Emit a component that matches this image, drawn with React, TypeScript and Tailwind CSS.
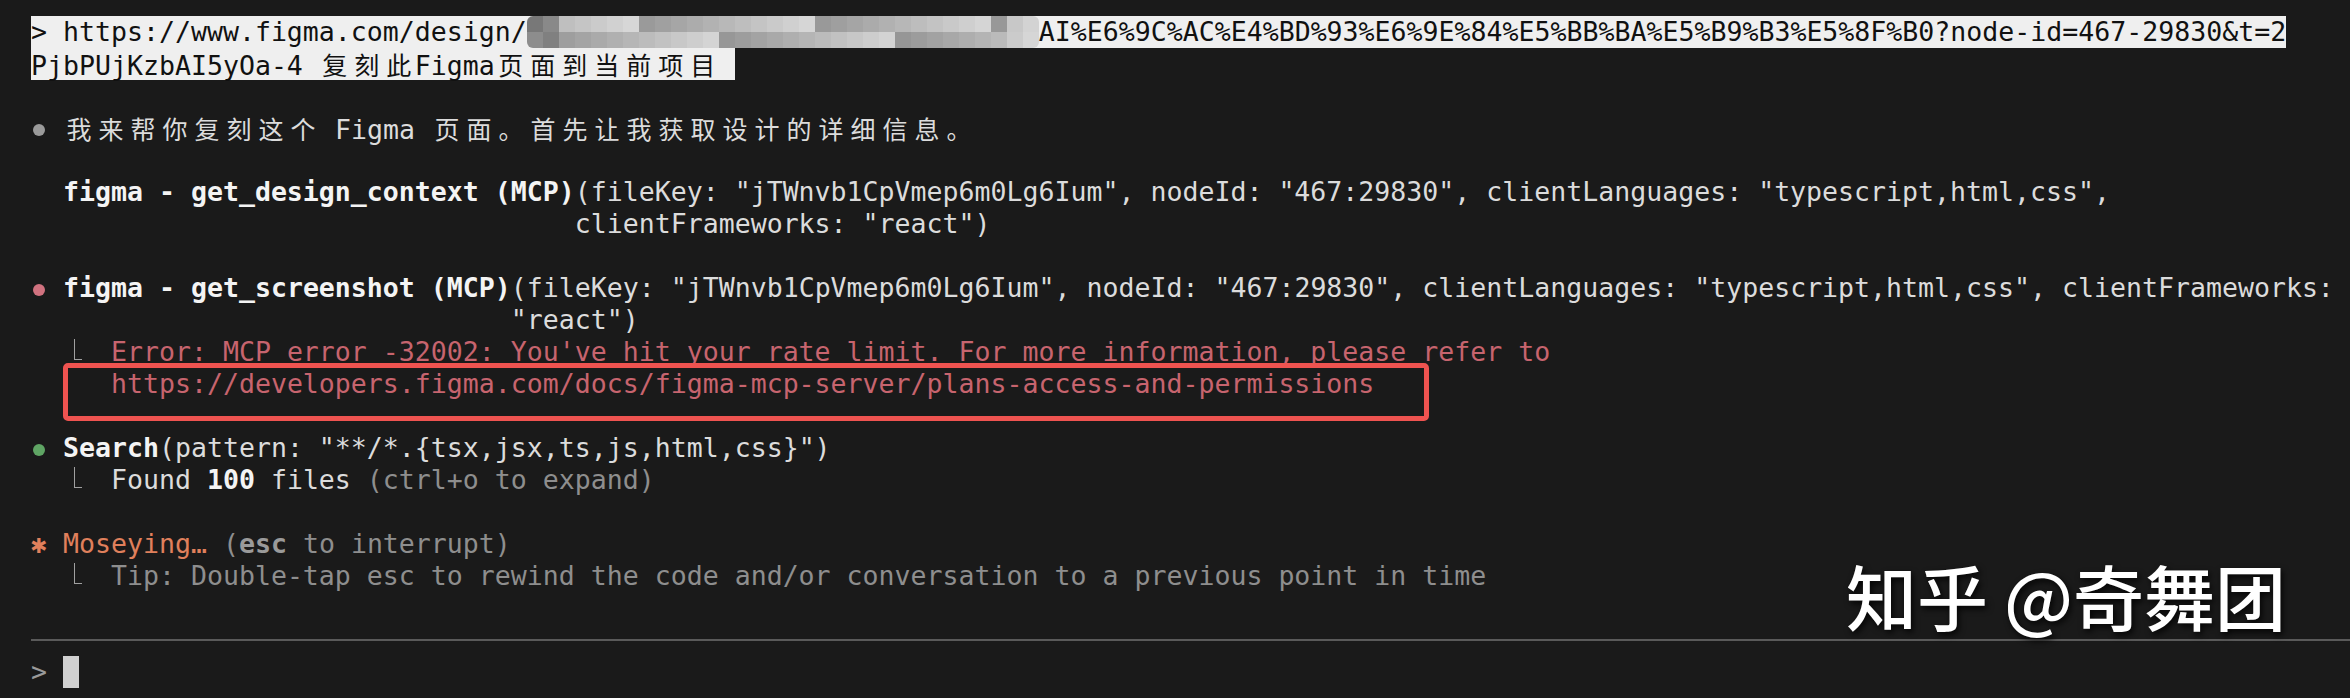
import React from "react";

const CJK = /[\u2E80-\u9FFF\u3000-\u303F\uFF00-\uFFEF]/;

function M({ s }: { s: string }) {
  const out: React.ReactNode[] = [];
  let buf = "";
  let k = 0;
  for (const ch of s) {
    if (CJK.test(ch)) {
      if (buf) out.push(<span key={k++}>{buf}</span>);
      buf = "";
      out.push(
        <span
          key={k++}
          className="inline-block w-[32px] text-center font-['Noto_Sans_CJK_SC',sans-serif] text-[25px]"
        >
          {ch}
        </span>
      );
    } else buf += ch;
  }
  if (buf) out.push(<span key={k++}>{buf}</span>);
  return <>{out}</>;
}

function Line({ children }: { children?: React.ReactNode }) {
  return <div className="h-[32px] whitespace-pre">{children}</div>;
}

function Dot({ color }: { color: string }) {
  return (
    <span className="inline-flex w-[16px] h-[32px] align-top items-center justify-center">
      <span className={`block w-[12px] h-[12px] rounded-full mt-[3px] ${color}`} />
    </span>
  );
}

function Elbow() {
  return (
    <span className="inline-block relative w-[16px] h-[32px] align-top">
      <span className="absolute left-[11px] top-[3px] w-[8px] h-[21px] border-l-[1.5px] border-b-[1.5px] border-[#a0a0a0]" />
    </span>
  );
}

const mosaic = Array.from({ length: 66 }, (_, i) => {
  const col = i % 33;
  const row = Math.floor(i / 33);
  let v = 150 + ((i * 73 + row * 37 + 29) % 67);
  if (col < 2) v = 120 + ((i * 17) % 30);
  if (col > 29) v = 200 + ((i * 11) % 30);
  return `rgb(${v},${v},${v})`;
});

function Mosaic() {
  return (
    <span className="inline-grid grid-cols-[repeat(33,16px)] grid-rows-[repeat(2,16px)] w-[512px] h-[32px] align-top rounded-[6px] overflow-hidden">
      {mosaic.map((c, i) => (
        <span key={i} className="block" style={{ backgroundColor: c }} />
      ))}
    </span>
  );
}

export default function App() {
  const B = "text-[#f4f4f4] font-bold";
  const red = "text-[#c7646e]";
  const gray = "text-[#8e8e8e]";
  return (
    <div className="relative w-[2350px] h-[698px] overflow-hidden bg-[#1a1a1a] pt-[16px] pl-[31px] font-['DejaVu_Sans_Mono','Noto_Sans_CJK_SC',monospace] text-[26.57px] leading-[32px] text-[#dcdcdc]">
      <Line>
        <span className="inline-block h-[32px] align-top bg-[#efefef] text-[#111]">
          {"> https://www.figma.com/design/"}
          <Mosaic />
          {"AI%E6%9C%AC%E4%BD%93%E6%9E%84%E5%BB%BA%E5%B9%B3%E5%8F%B0?node-id=467-29830&t=2"}
        </span>
      </Line>
      <Line>
        <span className="inline-block h-[32px] align-top bg-[#efefef] text-[#111]">
          <M s="PjbPUjKzbAI5yOa-4 复刻此Figma页面到当前项目 " />
        </span>
      </Line>
      <Line />
      <Line>
        <Dot color="bg-[#9a9a9a]" />
        {" "}
        <M s="我来帮你复刻这个 Figma 页面。首先让我获取设计的详细信息。" />
      </Line>
      <Line />
      <Line>
        {"  "}
        <span className={B}>figma - get_design_context (MCP)</span>
        {'(fileKey: "jTWnvb1CpVmep6m0Lg6Ium", nodeId: "467:29830", clientLanguages: "typescript,html,css",'}
      </Line>
      <Line>
        {" ".repeat(34)}
        {'clientFrameworks: "react")'}
      </Line>
      <Line />
      <Line>
        <Dot color="bg-[#d0727f]" />
        {" "}
        <span className={B}>figma - get_screenshot (MCP)</span>
        {'(fileKey: "jTWnvb1CpVmep6m0Lg6Ium", nodeId: "467:29830", clientLanguages: "typescript,html,css", clientFrameworks:'}
      </Line>
      <Line>
        {" ".repeat(30)}
        {'"react")'}
      </Line>
      <Line>
        {"  "}
        <Elbow />
        {"  "}
        <span className={red}>
          {"Error: MCP error -32002: You've hit your rate limit. For more information, please refer to"}
        </span>
      </Line>
      <Line>
        {"     "}
        <span className={red}>https://developers.figma.com/docs/figma-mcp-server/plans-access-and-permissions</span>
      </Line>
      <Line />
      <Line>
        <Dot color="bg-[#5fa564]" />
        {" "}
        <span className={B}>Search</span>
        {'(pattern: "**/*.{tsx,jsx,ts,js,html,css}")'}
      </Line>
      <Line>
        {"  "}
        <Elbow />
        {"  Found "}
        <span className={B}>100</span>
        {" files "}
        <span className={gray}>(ctrl+o to expand)</span>
      </Line>
      <Line />
      <Line>
        <span className="text-[#e0805c]">✱</span>
        {" "}
        <span className="text-[#e0805c]">Moseying…</span>
        {" "}
        <span className={gray}>(</span>
        <span className="text-[#9a9a9a] font-bold">esc</span>
        <span className={gray}> to interrupt)</span>
      </Line>
      <Line>
        {"  "}
        <Elbow />
        {"  "}
        <span className={gray}>
          Tip: Double-tap esc to rewind the code and/or conversation to a previous point in time
        </span>
      </Line>
      <Line />
      <div className="h-[32px] flex items-center">
        <div className="h-[2px] w-full bg-[#5a5a5a]" />
      </div>
      <Line>
        <span className="text-[#9a9a9a]">{">"}</span>
        {" "}
        <span className="inline-block w-[16px] h-[32px] align-top bg-[#d0d0d0]" />
      </Line>

      <div className="absolute left-[63px] top-[363px] w-[1366px] h-[58px] border-[5px] border-[#ef5350] rounded-[5px]" />

      <div className="absolute left-[1846px] top-[559px] whitespace-pre font-['Noto_Sans_CJK_SC',sans-serif] font-medium text-[71px] leading-none text-white drop-shadow-[2px_3px_3px_rgba(0,0,0,0.85)]">
        知乎 @奇舞团
      </div>
    </div>
  );
}
